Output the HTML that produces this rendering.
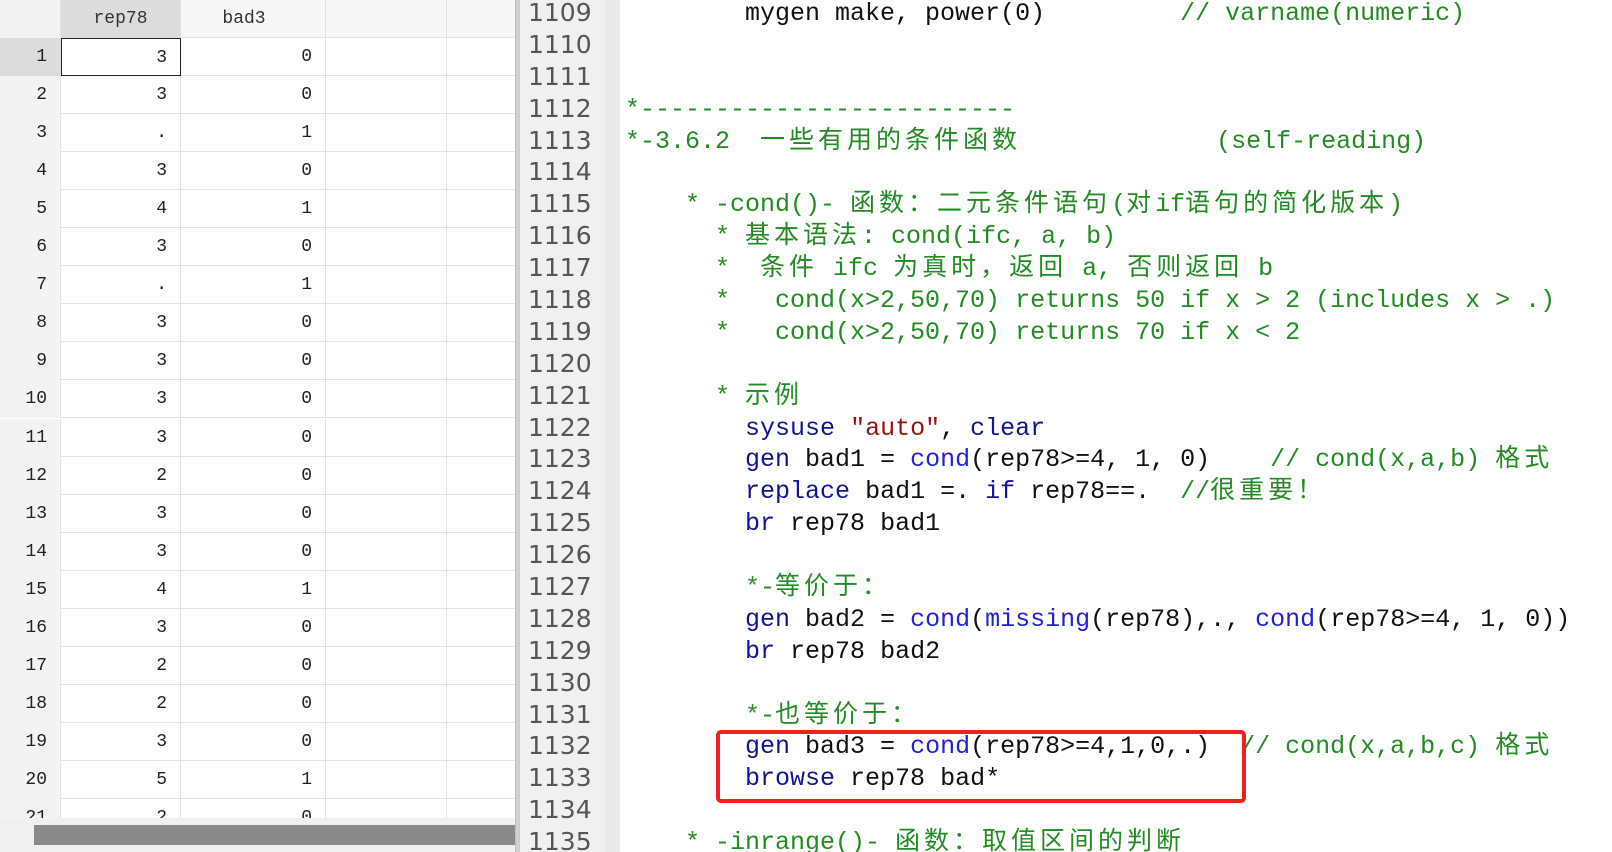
<!DOCTYPE html>
<html><head><meta charset="utf-8"><style>
*{margin:0;padding:0;box-sizing:border-box}
html,body{width:1612px;height:852px;overflow:hidden}
body{background:#fff;position:relative;font-family:"Liberation Mono","Noto Sans CJK SC",monospace}
.left{position:absolute;left:0;top:0;width:517px;height:852px;background:#fff;overflow:hidden}
.grid{position:absolute;left:0;top:0;width:517px;height:818px;overflow:hidden}
.row{position:absolute;left:0;width:517px;height:38px;border-bottom:1px solid #e2e2e2}
.c{position:absolute;top:0;height:38px;line-height:38px;font-size:18px;color:#222;text-align:right;border-right:1px solid #e2e2e2}
.scroll{position:absolute;left:0;top:818px;width:517px;height:34px;background:#f0f0f0}
.thumb{position:absolute;left:34px;top:7px;width:483px;height:20px;background:#8a8a8a}
.div{position:absolute;left:515px;top:0;width:5px;height:852px;background:linear-gradient(to right,#bdbdbd,#d6d6d6,#c8c8c8)}
.gut{position:absolute;left:520px;top:0;width:85px;height:852px;background:#f0f0f0}
.gut2{position:absolute;left:605px;top:0;width:15px;height:852px;background:#e9e9e9}
.ln{position:absolute;left:528px;top:-3px;font-family:"DejaVu Sans","Liberation Sans",sans-serif;font-size:25px;color:#555}
.ln div{height:31.9px;line-height:31.9px}
.code{position:absolute;left:625px;top:-2px;font-size:25px;color:#111;width:1000px}
.code div{height:31.9px;line-height:31.9px;white-space:pre;overflow:visible}
.g{color:#238b23}.k{color:#141491}.f{color:#2121d6}.s{color:#9a1010}
.z{font-family:"Noto Sans CJK SC",sans-serif;letter-spacing:4px;font-size:25px;line-height:1}
.box{position:absolute;left:716px;top:730px;width:530px;height:73px;border:4px solid #f02020;border-radius:5px}
</style></head><body>
<div class="left"><div class="grid">
<div class="row" style="top:0;background:#f7f7f7">
<div class="c" style="left:0;width:61px;background:#f3f3f3"></div>
<div class="c" style="left:61px;width:120px;background:#dcdcdc;text-align:center;color:#333">rep78</div>
<div class="c" style="left:181px;width:145px;text-align:center;color:#333;padding-right:18px">bad3</div>
<div class="c" style="left:326px;width:121px"></div>
</div>
<div id="rows"></div>
</div>
<div class="scroll"><div class="thumb"></div></div></div>
<div class="div"></div><div class="gut"></div><div class="gut2"></div>
<div class="ln" id="ln"></div>
<div class="code">
<div>        mygen make, power(0)         <span class="g">// varname(numeric)</span></div>
<div></div>
<div></div>
<div class="g">*-------------------------</div>
<div class="g">*-3.6.2  <span class="z">一些有用的条件函数</span>             (self-reading)</div>
<div></div>
<div class="g">    * -cond()- <span class="z">函数：二元条件语句</span>(<span class="z">对</span>if<span class="z">语句的简化版本</span>)</div>
<div class="g">      * <span class="z">基本语法</span>: cond(ifc, a, b)</div>
<div class="g">      *  <span class="z">条件</span> ifc <span class="z">为真时，返回</span> a, <span class="z">否则返回</span> b</div>
<div class="g">      *   cond(x>2,50,70) returns 50 if x > 2 (includes x > .)</div>
<div class="g">      *   cond(x>2,50,70) returns 70 if x < 2</div>
<div></div>
<div class="g">      * <span class="z">示例</span></div>
<div>        <span class="k">sysuse</span> <span class="s">"auto"</span>, <span class="k">clear</span></div>
<div>        <span class="k">gen</span> bad1 = <span class="f">cond</span>(rep78>=4, 1, 0)    <span class="g">// cond(x,a,b) <span class="z">格式</span></span></div>
<div>        <span class="k">replace</span> bad1 =. <span class="k">if</span> rep78==.  <span class="g">//<span class="z">很重要！</span></span></div>
<div>        <span class="k">br</span> rep78 bad1</div>
<div></div>
<div class="g">        *-<span class="z">等价于：</span></div>
<div>        <span class="k">gen</span> bad2 = <span class="f">cond</span>(<span class="f">missing</span>(rep78),., <span class="f">cond</span>(rep78>=4, 1, 0))</div>
<div>        <span class="k">br</span> rep78 bad2</div>
<div></div>
<div class="g">        *-<span class="z">也等价于：</span></div>
<div>        <span class="k">gen</span> bad3 = <span class="f">cond</span>(rep78>=4,1,0,.)  <span class="g">// cond(x,a,b,c) <span class="z">格式</span></span></div>
<div>        <span class="k">browse</span> rep78 bad*</div>
<div></div>
<div class="g">    * -inrange()- <span class="z">函数：取值区间的判断</span></div>
</div>
<div class="box"></div>
<script>
var a=[3,3,'.',3,4,3,'.',3,3,3,3,2,3,3,4,3,2,2,3,5,2],b=[0,0,1,0,1,0,1,0,0,0,0,0,0,0,1,0,0,0,0,1,0],h='';
for(var i=0;i<21;i++){var t=38+i*38.05;
h+='<div class="row" style="top:'+t+'px"><div class="c" style="left:0;width:61px;padding-right:13px;background:'+(i==0?'#dcdcdc':'#f3f3f3')+'">'+(i+1)+'</div><div class="c" style="left:61px;width:120px;padding-right:13px;'+(i==0?'border:1.5px solid #222;':'')+'">'+a[i]+'</div><div class="c" style="left:181px;width:145px;padding-right:13px">'+b[i]+'</div><div class="c" style="left:326px;width:121px"></div></div>';}
document.getElementById('rows').innerHTML=h;
var l='';for(var n=1109;n<=1135;n++)l+='<div>'+n+'</div>';
document.getElementById('ln').innerHTML=l;
</script>
</body></html>
